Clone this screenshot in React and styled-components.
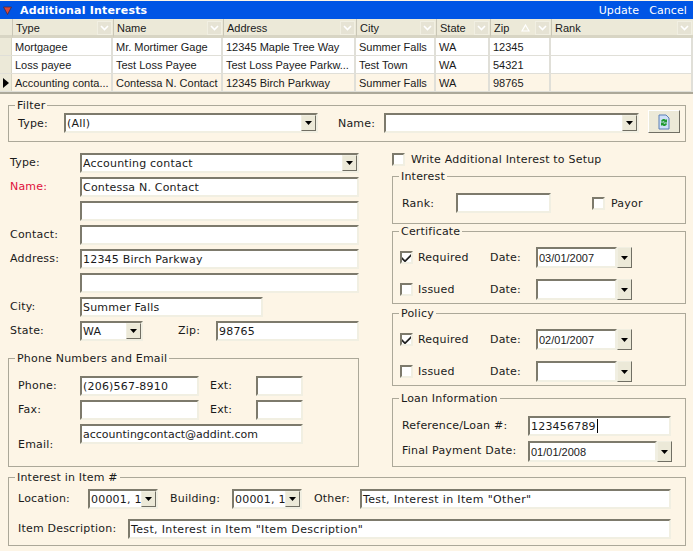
import React from 'react';
import styled, { createGlobalStyle } from 'styled-components';

const GlobalStyle = createGlobalStyle`
  html, body {
    margin: 0;
    padding: 0;
    background: #fdf5e6;
  }
  * {
    box-sizing: border-box;
  }
`;

const Page = styled.div`
  width: 693px;
  height: 551px;
  overflow: hidden;
  background: #fdf5e6;
  color: #1a1a1a;
  font-family: "DejaVu Sans", Verdana, sans-serif;
  font-size: 11px;
  letter-spacing: 0.2px;
`;

const TitleBar = styled.div`
  height: 18px;
  margin-top: 1px;
  padding: 0 6px 0 3px;
  display: flex;
  align-items: center;
  background: #0055e5;
  color: #fff;
`;

const Title = styled.div`
  margin-left: 8px;
  flex: 1;
  font-size: 11px;
  font-weight: bold;
  letter-spacing: 0.2px;
`;

const TitleAction = styled.span`
  margin-left: 10px;
  font-size: 11px;
  letter-spacing: 0.1px;
`;

const Grid = styled.div`
  height: 75px;
  border-bottom: 2px solid #aca899;
  font-family: "Liberation Sans", Arial, sans-serif;
  font-size: 11px;
  letter-spacing: 0;
  background: #fff;
`;

const GridRow = styled.div`
  display: grid;
  grid-template-columns: 12px 101px 110px 133px 80px 54px 61px 1fr;
  height: ${p => p.$height}px;
  background: ${p => p.$bg};
  border-bottom: ${p => (p.$last ? 'none' : '1px solid #e0dfd8')};
`;

const HeaderCell = styled.div`
  display: flex;
  align-items: center;
  padding: 1px 0 0 3px;
  background: #ece9d8;
  border-left: 1px solid #c9c6b6;
  border-bottom: 3px solid #d8d5c4;
`;

const HeaderLabel = styled.span`
  flex: 1;
  padding-top: 1px;
  white-space: nowrap;
`;

const ColumnButton = styled.span`
  width: 15px;
  height: 14px;
  margin-right: 1px;
  display: flex;
  align-items: center;
  justify-content: center;
  background: #e6e3d4;
  border: 1px solid #f1efe2;
`;

const HeaderStub = styled.div`
  background: #ece9d8;
  border-bottom: 3px solid #d8d5c4;
`;

const RowStub = styled.div`
  display: flex;
  align-items: center;
  justify-content: center;
  background: #ece9d8;
  border-right: 1px solid #d8d5c4;
`;

const Cell = styled.div`
  display: flex;
  align-items: center;
  padding: 1px 0 0 3px;
  white-space: nowrap;
  overflow: hidden;
  border-right: 2px solid #e0dfd8;
`;

const Body = styled.div`
  padding: 6px 7px 0 8px;
`;

const Box = styled.fieldset`
  margin: ${p => p.$top || 0}px 0 0;
  padding: 0;
  min-width: 0;
  height: ${p => p.$height}px;
  border: 1px solid #aca899;
`;

const Legend = styled.legend`
  margin-left: 6px;
  padding: 0 2px;
  line-height: 11px;
  font-size: 11px;
  white-space: nowrap;
`;

const Columns = styled.div`
  margin-top: 11px;
  display: grid;
  grid-template-columns: 351px 294px;
  column-gap: 33px;
`;

const Column = styled.div`
  display: flex;
  flex-direction: column;
`;

const FieldRow = styled.div`
  height: ${p => p.$height || 24}px;
  padding-top: ${p => p.$pad || 0}px;
  padding-left: ${p => p.$indent || 0}px;
  display: flex;
  align-items: ${p => p.$align || 'flex-start'};
`;

const Label = styled.span`
  width: ${p => p.$width}px;
  margin-left: ${p => p.$gap || 0}px;
  flex: none;
  padding-top: ${p => (p.$drop === undefined ? 3 : p.$drop)}px;
  color: ${p => (p.$required ? '#e0103c' : 'inherit')};
  white-space: nowrap;
`;

const FieldShell = styled.div`
  width: ${p => p.$width}px;
  height: ${p => p.$height || 20}px;
  margin-left: ${p => p.$gap || 0}px;
  flex: none;
  display: flex;
  align-items: center;
  overflow: hidden;
  padding-left: 1px;
  background: #fff;
  border: 2px solid;
  border-color: #7d7a6c #f1efe2 #f1efe2 #7d7a6c;
  font-family: ${p => (p.$tight ? '"Liberation Sans", Arial, sans-serif' : 'inherit')};
  letter-spacing: ${p => (p.$track === undefined ? 0.2 : p.$track)}px;
  white-space: nowrap;
`;

const FieldText = styled.span`
  flex: 1;
  min-width: 0;
  overflow: hidden;
`;

const Caret = styled.span`
  width: 1px;
  height: 14px;
  margin-left: 1px;
  background: #000;
`;

const ArrowButton = styled.span`
  width: 15px;
  height: 16px;
  flex: none;
  display: flex;
  align-items: center;
  justify-content: center;
  background: #ece9d8;
  border: 1px solid;
  border-color: #f1efe2 #716f64 #716f64 #f1efe2;
`;

const DateWrap = styled.div`
  flex: none;
  display: flex;
  align-items: stretch;
`;

const DateArrow = styled(ArrowButton)`
  height: 21px;
`;

const CheckSquare = styled.span`
  width: 13px;
  height: 13px;
  flex: none;
  display: flex;
  align-items: center;
  justify-content: center;
  background: #fff;
  border: 2px solid;
  border-color: #7d7a6c #f1efe2 #f1efe2 #7d7a6c;
`;

const CheckLabel = styled.span`
  margin-left: ${p => p.$gap || 6}px;
  white-space: nowrap;
`;

const CheckGroup = styled.div`
  width: ${p => p.$width}px;
  margin-left: ${p => p.$gap || 0}px;
  flex: none;
  display: flex;
  align-items: center;
`;

const RefreshButton = styled.span`
  width: 32px;
  height: 23px;
  margin: -3px 0 0 9px;
  flex: none;
  display: flex;
  align-items: center;
  justify-content: center;
  background: #ece9d8;
  border: 1px solid;
  border-color: #fff #716f64 #716f64 #fff;
`;

const SortMark = styled.svg`
  margin-right: 5px;
`;

const Chevron = () => (
  <svg width="9" height="6" viewBox="0 0 9 6">
    <path d="M1 1l3.500 3.500L8 1" fill="none" stroke="#fff" strokeWidth="1.6" />
  </svg>
);

const DownArrow = () => (
  <svg width="7" height="4" viewBox="0 0 7 4">
    <path d="M0 0h7L3.500 4z" fill="#000" />
  </svg>
);

const Check = () => (
  <svg width="9" height="9" viewBox="0 0 9 9">
    <path d="M0 4l3 3 6-6v2.500L3 9.500 0 6.500z" fill="#222" />
  </svg>
);

const Select = ({ width, gap, value }) => (
  <FieldShell $width={width} $gap={gap}>
    <FieldText>{value}</FieldText>
    <ArrowButton><DownArrow /></ArrowButton>
  </FieldShell>
);

const DateField = ({ value, width = 81 }) => (
  <DateWrap>
    <FieldShell $width={width} $height={21} $tight $track={0}>
      <FieldText>{value}</FieldText>
    </FieldShell>
    <DateArrow><DownArrow /></DateArrow>
  </DateWrap>
);

const Checkbox = ({ checked, label, width, gap, labelGap }) => (
  <CheckGroup $width={width} $gap={gap}>
    <CheckSquare>{checked && <Check />}</CheckSquare>
    <CheckLabel $gap={labelGap}>{label}</CheckLabel>
  </CheckGroup>
);

const columns = ['Type', 'Name', 'Address', 'City', 'State', 'Zip', 'Rank'];

const rows = [
  ['Mortgagee', 'Mr. Mortimer Gage', '12345 Maple Tree Way', 'Summer Falls', 'WA', '12345', ''],
  ['Loss payee', 'Test Loss Payee', 'Test Loss Payee Parkw...', 'Test Town', 'WA', '54321', ''],
  ['Accounting conta...', 'Contessa N. Contact', '12345 Birch Parkway', 'Summer Falls', 'WA', '98765', ''],
];

const DateRows = ({ date }) => (
  <>
    <FieldRow $height={41} $indent={7} $align="center">
      <Checkbox checked label="Required" width={90} labelGap={5} />
      <Label $width={46} $drop={0}>Date:</Label>
      <DateField value={date} />
    </FieldRow>
    <FieldRow $height={23} $indent={7} $align="center">
      <Checkbox label="Issued" width={90} labelGap={5} />
      <Label $width={46} $drop={0}>Date:</Label>
      <DateField value="" />
    </FieldRow>
  </>
);

export default function App() {
  return (
    <Page>
      <GlobalStyle />
      <TitleBar>
        <svg width="9" height="9" viewBox="0 0 9 9">
          <path d="M.5 1h8L4.500 8.500z" fill="#d8483c" stroke="#4a2a40" strokeWidth="0.8" />
        </svg>
        <Title>Additional Interests</Title>
        <TitleAction>Update</TitleAction>
        <TitleAction>Cancel</TitleAction>
      </TitleBar>

      <Grid>
        <GridRow $height={19} $last>
          <HeaderStub />
          {columns.map(name => (
            <HeaderCell key={name}>
              <HeaderLabel>{name}</HeaderLabel>
              {name === 'Zip' && (
                <SortMark width="9" height="8" viewBox="0 0 9 8">
                  <path d="M4.500 1L8 7H1z" fill="none" stroke="#fff" strokeWidth="1.2" />
                </SortMark>
              )}
              <ColumnButton><Chevron /></ColumnButton>
            </HeaderCell>
          ))}
        </GridRow>
        {rows.map((row, i) => (
          <GridRow key={row[0]} $height={18} $bg={i === 2 ? '#fdf5e6' : '#fff'}>
            <RowStub>
              {i === 2 && (
                <svg width="6" height="10" viewBox="0 0 6 10">
                  <path d="M0 0l6 5-6 5z" fill="#000" />
                </svg>
              )}
            </RowStub>
            {row.map((text, j) => <Cell key={j}>{text}</Cell>)}
          </GridRow>
        ))}
      </Grid>

      <Body>
        <Box $height={42}>
          <Legend>Filter</Legend>
          <FieldRow $indent={9} $height={24} $align="center">
            <Label $width={46} $drop={0}>Type:</Label>
            <Select width={254} value="(All)" />
            <Label $width={46} $gap={20} $drop={0}>Name:</Label>
            <Select width={255} value="" />
            <RefreshButton>
              <svg width="16" height="16" viewBox="0 0 16 16">
                <path d="M3 1h7l3 3v11H3z" fill="#cfe0f8" stroke="#5b7fb5" />
                <path d="M5 7a3 3 0 0 1 5-1l1-1v3.500H7.500l1-1a2 2 0 0 0-2.500 .5z" fill="#1f9a2e" />
                <path d="M11 10a3 3 0 0 1-5 1l-1 1V8.500h3.500l-1 1a2 2 0 0 0 2.500-.5z" fill="#1f9a2e" />
              </svg>
            </RefreshButton>
          </FieldRow>
        </Box>

        <Columns>
          <Column>
            <FieldRow>
              <Label $width={70} $gap={2}>Type:</Label>
              <Select width={279} value="Accounting contact" />
            </FieldRow>
            <FieldRow>
              <Label $width={70} $gap={2} $required>Name:</Label>
              <FieldShell $width={279}>Contessa N. Contact</FieldShell>
            </FieldRow>
            <FieldRow>
              <Label $width={70} $gap={2} />
              <FieldShell $width={279} />
            </FieldRow>
            <FieldRow>
              <Label $width={70} $gap={2}>Contact:</Label>
              <FieldShell $width={279} />
            </FieldRow>
            <FieldRow>
              <Label $width={70} $gap={2}>Address:</Label>
              <FieldShell $width={279}>12345 Birch Parkway</FieldShell>
            </FieldRow>
            <FieldRow>
              <Label $width={70} $gap={2} />
              <FieldShell $width={279} />
            </FieldRow>
            <FieldRow>
              <Label $width={70} $gap={2}>City:</Label>
              <FieldShell $width={183}>Summer Falls</FieldShell>
            </FieldRow>
            <FieldRow>
              <Label $width={70} $gap={2}>State:</Label>
              <Select width={63} value="WA" />
              <Label $width={38} $gap={35}>Zip:</Label>
              <FieldShell $width={143}>98765</FieldShell>
            </FieldRow>

            <Box $top={8} $height={114}>
              <Legend>Phone Numbers and Email</Legend>
              <FieldRow $indent={9} $height={36} $pad={12}>
                <Label $width={62}>Phone:</Label>
                <FieldShell $width={119}>(206)567-8910</FieldShell>
                <Label $width={46} $gap={11}>Ext:</Label>
                <FieldShell $width={47} />
              </FieldRow>
              <FieldRow $indent={9}>
                <Label $width={62}>Fax:</Label>
                <FieldShell $width={119} />
                <Label $width={46} $gap={11}>Ext:</Label>
                <FieldShell $width={47} />
              </FieldRow>
              <FieldRow $indent={9}>
                <Label $width={62} $drop={14}>Email:</Label>
                <FieldShell $width={223} $track={0}>accountingcontact@addint.com</FieldShell>
              </FieldRow>
            </Box>
          </Column>

          <Column>
            <FieldRow $height={18}>
              <Checkbox label="Write Additional Interest to Setup" width={280} />
            </FieldRow>
            <Box $height={53}>
              <Legend>Interest</Legend>
              <FieldRow $indent={9} $height={31} $pad={11} $align="center">
                <Label $width={54} $drop={0}>Rank:</Label>
                <FieldShell $width={95} />
                <Checkbox label="Payor" width={70} gap={41} />
              </FieldRow>
            </Box>
            <Box $top={2} $height={78}>
              <Legend>Certificate</Legend>
              <DateRows date="03/01/2007" />
            </Box>
            <Box $top={4} $height={78}>
              <Legend>Policy</Legend>
              <DateRows date="02/01/2007" />
            </Box>
            <Box $top={7} $height={74}>
              <Legend>Loan Information</Legend>
              <FieldRow $indent={9} $height={37} $pad={12}>
                <Label $width={126}>Reference/Loan #:</Label>
                <FieldShell $width={143}>123456789<Caret /></FieldShell>
              </FieldRow>
              <FieldRow $indent={9}>
                <Label $width={126}>Final Payment Date:</Label>
                <DateField value="01/01/2008" width={129} />
              </FieldRow>
            </Box>
          </Column>
        </Columns>

        <Box $top={5} $height={74}>
          <Legend>Interest in Item #</Legend>
          <FieldRow $height={36} $indent={9} $pad={6}>
            <Label $width={70}>Location:</Label>
            <Select width={70} value="00001, 1" />
            <Label $width={62} $gap={12}>Building:</Label>
            <Select width={70} value="00001, 1" />
            <Label $width={46} $gap={12}>Other:</Label>
            <FieldShell $width={311} $track={0.35}>Test, Interest in Item "Other"</FieldShell>
          </FieldRow>
          <FieldRow $indent={9}>
            <Label $width={110}>Item Description:</Label>
            <FieldShell $width={543} $track={0.35}>Test, Interest in Item "Item Description"</FieldShell>
          </FieldRow>
        </Box>
      </Body>
    </Page>
  );
}
